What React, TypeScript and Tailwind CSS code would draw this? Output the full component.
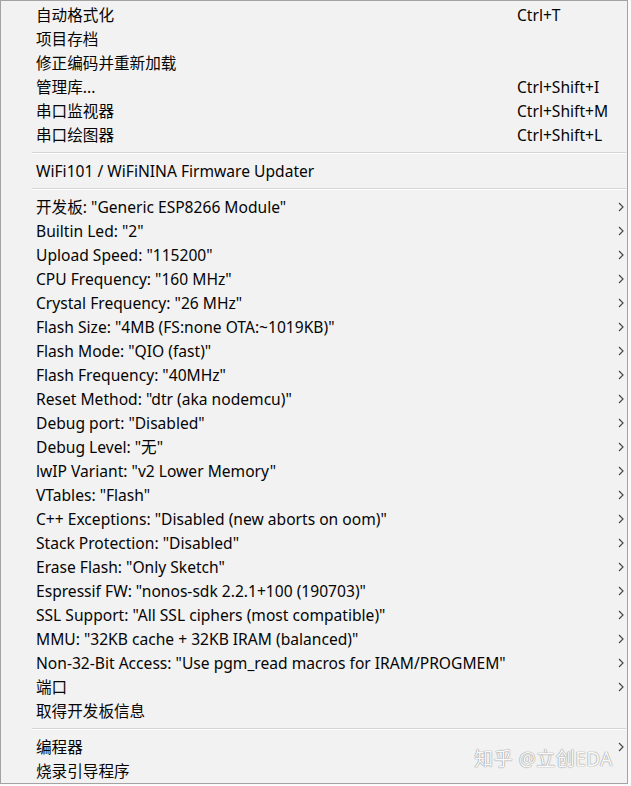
import React from 'react';

type Item =
  | { kind: 'sep' }
  | { kind: 'item'; label: string; shortcut?: string; sub?: boolean };

const items: Item[] = [
  { kind: 'item', label: '自动格式化', shortcut: 'Ctrl+T' },
  { kind: 'item', label: '项目存档' },
  { kind: 'item', label: '修正编码并重新加载' },
  { kind: 'item', label: '管理库...', shortcut: 'Ctrl+Shift+I' },
  { kind: 'item', label: '串口监视器', shortcut: 'Ctrl+Shift+M' },
  { kind: 'item', label: '串口绘图器', shortcut: 'Ctrl+Shift+L' },
  { kind: 'sep' },
  { kind: 'item', label: 'WiFi101 / WiFiNINA Firmware Updater' },
  { kind: 'sep' },
  { kind: 'item', label: '开发板: "Generic ESP8266 Module"', sub: true },
  { kind: 'item', label: 'Builtin Led: "2"', sub: true },
  { kind: 'item', label: 'Upload Speed: "115200"', sub: true },
  { kind: 'item', label: 'CPU Frequency: "160 MHz"', sub: true },
  { kind: 'item', label: 'Crystal Frequency: "26 MHz"', sub: true },
  { kind: 'item', label: 'Flash Size: "4MB (FS:none OTA:~1019KB)"', sub: true },
  { kind: 'item', label: 'Flash Mode: "QIO (fast)"', sub: true },
  { kind: 'item', label: 'Flash Frequency: "40MHz"', sub: true },
  { kind: 'item', label: 'Reset Method: "dtr (aka nodemcu)"', sub: true },
  { kind: 'item', label: 'Debug port: "Disabled"', sub: true },
  { kind: 'item', label: 'Debug Level: "无"', sub: true },
  { kind: 'item', label: 'lwIP Variant: "v2 Lower Memory"', sub: true },
  { kind: 'item', label: 'VTables: "Flash"', sub: true },
  { kind: 'item', label: 'C++ Exceptions: "Disabled (new aborts on oom)"', sub: true },
  { kind: 'item', label: 'Stack Protection: "Disabled"', sub: true },
  { kind: 'item', label: 'Erase Flash: "Only Sketch"', sub: true },
  { kind: 'item', label: 'Espressif FW: "nonos-sdk 2.2.1+100 (190703)"', sub: true },
  { kind: 'item', label: 'SSL Support: "All SSL ciphers (most compatible)"', sub: true },
  { kind: 'item', label: 'MMU: "32KB cache + 32KB IRAM (balanced)"', sub: true },
  { kind: 'item', label: 'Non-32-Bit Access: "Use pgm_read macros for IRAM/PROGMEM"', sub: true },
  { kind: 'item', label: '端口', sub: true },
  { kind: 'item', label: '取得开发板信息' },
  { kind: 'sep' },
  { kind: 'item', label: '编程器', sub: true },
  { kind: 'item', label: '烧录引导程序' },
];

function Chevron() {
  return (
    <svg width="6" height="10" viewBox="0 0 6 10" fill="none">
      <path d="M1 1 L5 5 L1 9" stroke="#4a4a4a" strokeWidth="1.2" />
    </svg>
  );
}

export default function App() {
  return (
    <div className="w-[631px] h-[786px] bg-[#fafafa] overflow-hidden">
      <div
        className="relative w-[628px] h-[784px] bg-[#f2f2f2] border border-[#a3a3a3] pt-[2px] text-[15.6px] text-[#050505] leading-none"
        style={{ fontFamily: '"Noto Sans", "Noto Sans CJK SC", sans-serif' }}
      >
        {items.map((it, i) =>
          it.kind === 'sep' ? (
            <div key={i} className="h-3 flex items-center pl-[31px] pr-[1px]">
              <div className="w-full border-t border-[#d5d5d5] border-b-white border-b" />
            </div>
          ) : (
            <div key={i} className="h-6 flex items-center pl-[35px] pt-[2px]">
              <span className="flex-1 whitespace-nowrap">{it.label}</span>
              <span className="w-[96px] whitespace-nowrap">{it.shortcut ?? ''}</span>
              <span className="w-[14px] flex justify-end pr-[3px] -mt-[2px]">{it.sub ? <Chevron /> : null}</span>
            </div>
          )
        )}
        <div className="absolute right-[14px] bottom-[14px] text-[19px] text-[#f9f9f9] tracking-[0.5px] [text-shadow:0_0_1px_#8a8a8a,0_0_1px_#8a8a8a]">
          知乎 @立创EDA
        </div>
      </div>
    </div>
  );
}
